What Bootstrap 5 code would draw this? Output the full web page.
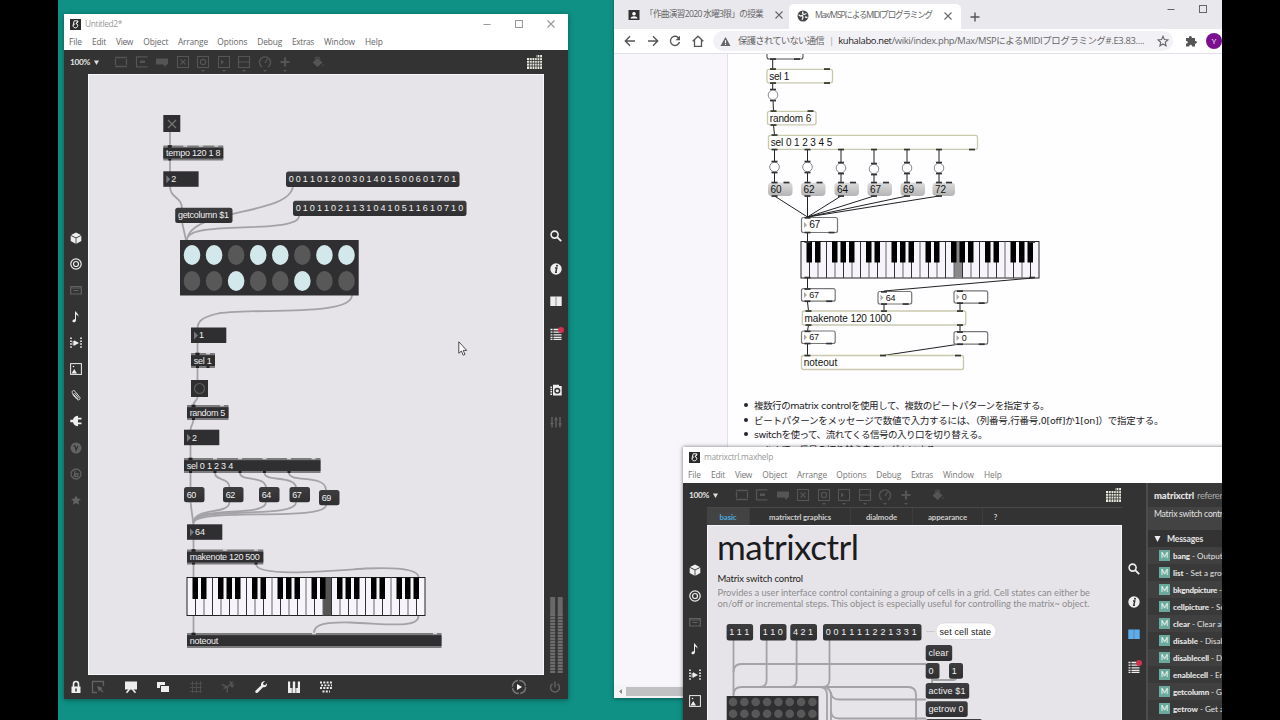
<!DOCTYPE html>
<html lang="ja">
<head>
<meta charset="utf-8">
<title>Desktop</title>
<link href="https://cdn.jsdelivr.net/npm/bootstrap@5.3.0/dist/css/bootstrap.min.css" rel="stylesheet">
<script src="https://cdn.jsdelivr.net/npm/bootstrap@5.3.0/dist/js/bootstrap.bundle.min.js"></script>
<style>
body{margin:0;width:1280px;height:720px;overflow:hidden;background:#000;font-family:"Open Sans","Noto Sans CJK JP",sans-serif;font-size:8.4px;line-height:1.2}
svg{display:block;flex:none}
.desk{position:relative;width:1164px;height:720px;margin-left:58px;background:#0f9185;overflow:hidden}
.win{position:absolute;overflow:hidden}
.w-main{left:6px;top:14px;width:504px;height:685px;background:#333;box-shadow:0 1px 5px rgba(0,40,40,.55)}
.w-web{left:556px;top:-4px;width:620px;height:702px;background:#fefdff;box-shadow:0 1px 4px rgba(0,40,40,.5)}
.w-help{left:625px;top:447px;width:560px;height:300px;background:#333;box-shadow:0 0 4px rgba(0,0,0,.55)}
.titlebar{height:20px;background:#fff;color:#999;padding-left:6px}
.menubar{height:16px;background:#fff;color:#666;display:grid;grid-template-columns:23px 24px 27.3px 34.7px 39.3px 40px 34.7px 32px 41px 30px;align-items:center;padding-left:5px}
.w-help .menubar{color:#777}
.tools{height:24px;color:#555;padding-left:6px;background:#333}
.tools .ic{margin-right:6.5px}
.zoomlvl{width:44.3px;color:#e4e4e4;font:bold 8.3px Lato,sans-serif}
.w-help .zoomlvl{width:45.7px}
.fill-gap{width:202.5px}
.w-help .fill-gap{width:161px}
.rail{width:24px;background:#333;color:#eee}
.rail .dimmed,.foot .dimmed{color:#626262}
.foot{height:24px;background:#333;color:#eee}
.foot .ic{margin-right:18.6px}
.tabsrow{height:18px;background:#333;color:#ccc;font:bold 7.8px Lato,sans-serif;border-top:1px solid #484848}
.tabsrow>div{height:17px;border-right:1px solid #3d3d3d;display:flex;align-items:center;justify-content:center}
.tabsrow .on{background:#434343;color:#49a9dd}
.refp{width:100px;background:#3b3b3b;border-left:2px solid #4d4d4d;color:#e4e4e4;font:600 8.6px Lato,sans-serif;white-space:nowrap}
.refrow{height:17px;padding-left:11px;background:#404040;font-size:8px}
.refrow:nth-child(even){background:#393939}
.mbadge{width:11px;height:11px;flex:none;background:#6aa99c;color:#e5f4f0;font-size:8px;line-height:11px;text-align:center;margin-right:3px}
.strip{height:33px;padding-top:4px;background:#e9e8ed;color:#666;font-size:8.6px}
.btab{height:29px;border-radius:5px 5px 0 0}
.btab.on{background:#fff}
.addr{height:25px;background:#fff;border-bottom:1px solid #e1e0e5;color:#555}
.omni{width:460px;height:20px;border-radius:10px;background:#f2f1f5;font-size:9.4px;color:#666}
.side{width:114px;background:#f8f6fb;border-right:1px solid #e3e1e7}
.notes{font:9.5px "DejaVu Sans","Noto Sans CJK JP",sans-serif;color:#222;list-style:none;margin:4px 0 0 16px;padding:0}
.notes li{height:14.6px;display:flex;align-items:center;white-space:nowrap}
.notes li::before{content:"";width:4px;height:4px;border-radius:2px;background:#223;margin-right:6px}
.nw{white-space:nowrap}
.avatar{width:16px;height:16px;border-radius:8px;background:#7a0f92;color:#fff;font-size:8px;line-height:16px;text-align:center}
.cursor{position:absolute;left:400px;top:341px}
.reddot{position:absolute;width:6px;height:6px;border-radius:3px;background:#cf3350;right:-2px;top:-1px}
.sheet{background:#e6e4e8;outline:1px solid #f7f6f9;outline-offset:-1px}
svg text{white-space:pre}
</style>
</head>
<body>
<svg width="0" height="0" style="position:absolute" fill="none">
<defs>
<linearGradient id="msgDark" x2="0" y2="1"><stop stop-color="#3d3c3e"/><stop offset="1" stop-color="#2f2e30"/></linearGradient>
<linearGradient id="msgLight" x2="0" y2="1"><stop stop-color="#dcdcdc"/><stop offset="1" stop-color="#b4b4b4"/></linearGradient>
<symbol id="logo" viewBox="0 0 11 11"><rect width="11" height="11" fill="#2b2b2e"/><path d="M4.2 1.800h3.600L6 5c2.500-.8 2.500 3.800-.6 3.900C2.300 8.900 2.600 5 5 5.100M4.200 1.800 3 6.500M8.300 2.500 6 5" fill="none" stroke="#eee" stroke-width="1"/></symbol>
<symbol id="t1" viewBox="0 0 14 14"><path d="M1 2.500h12M1 11.500h12M1.500 4v6M12.500 4v6" fill="none" stroke="currentColor" stroke-width="1.300"/></symbol>
<symbol id="t2" viewBox="0 0 14 14"><path d="M1.500 1.500V12M1 1.800h11.500M1 11.800h11.500" fill="none" stroke="currentColor" stroke-width="1.200"/><path d="M5 5.500h5v2.500H5z" fill="currentColor"/></symbol>
<symbol id="t3" viewBox="0 0 14 14"><path d="M1 3.500h12v6h-2V12L8 9.500H1z" fill="currentColor"/></symbol>
<symbol id="t4" viewBox="0 0 14 14"><path d="M1.500 1.500h11v11h-11zM4.500 4.500l5 5M9.500 4.500l-5 5" fill="none" stroke="currentColor" stroke-width="1.100"/></symbol>
<symbol id="t5" viewBox="0 0 14 18"><rect x="1.500" y="1.500" width="11" height="11" fill="none" stroke="currentColor" stroke-width="1.100"/><circle cx="7" cy="7" r="2.600" fill="none" stroke="currentColor" stroke-width="1.100"/><path d="M5 15h4l-2 2z" fill="currentColor"/></symbol>
<symbol id="t6" viewBox="0 0 14 18"><rect x="1.500" y="1.500" width="11" height="11" fill="none" stroke="currentColor" stroke-width="1.100"/><path d="M4 4.500v5L7 7zM5 15h4l-2 2z" fill="currentColor"/></symbol>
<symbol id="t7" viewBox="0 0 14 18"><path d="M1.500 1.500h11v11h-11zM2 7h10" fill="none" stroke="currentColor" stroke-width="1.200"/><path d="M5 15h4l-2 2z" fill="currentColor"/></symbol>
<symbol id="t8" viewBox="0 0 14 18"><path d="M4 12a5.500 5.500 0 1 1 6 0M7 8l2.500-4" fill="none" stroke="currentColor" stroke-width="1.400"/><path d="M5 15h4l-2 2z" fill="currentColor"/></symbol>
<symbol id="t9" viewBox="0 0 14 18"><path d="M7 2.500v9M2.500 7h9" fill="none" stroke="currentColor" stroke-width="2.200"/><path d="M5 15h4l-2 2z" fill="currentColor"/></symbol>
<symbol id="t10" viewBox="0 0 14 14"><path d="M1.500 7.500 6.500 3l5 4.500-5 4.500zM12.500 8.500v2.500h-1.300z" fill="currentColor"/><path d="M4 4.500a2.200 2.200 0 0 1 5 0" fill="none" stroke="currentColor"/></symbol>
<symbol id="grid" viewBox="0 0 15 14"><path d="M9.500 0h5.500v2.500H15V14H0V3h9.500z" fill="#ecece0"/><path d="M2.600 0v14M5.200 0v14M7.700 0v14M10.200 0v14M12.700 0v14M0 5.500h15M0 8.200h15M0 11h15M9.500 2.700h6" stroke="#333" stroke-width=".8"/></symbol>
<symbol id="cube" viewBox="0 0 12 12"><path d="M6 .5 11 3 6 5.500 1 3zM.7 3.700 5.600 6.200v5.500L.7 9zM11.300 3.700 6.400 6.200v5.500L11.300 9z" fill="currentColor"/></symbol>
<symbol id="target" viewBox="0 0 12 12"><g fill="none" stroke="currentColor" stroke-width="1.200"><circle cx="6" cy="6" r="5.200"/><circle cx="6" cy="6" r="2.500"/></g></symbol>
<symbol id="drawer" viewBox="0 0 12 12"><path d="M.7 2.500h10.600v7.500H.7zM1 4h10M3.500 6.500h5" fill="none" stroke="currentColor" stroke-width="1.200"/></symbol>
<symbol id="note" viewBox="0 0 12 12"><path d="M6 .5v8.500c0 2.700-3.500 3-3.500 1.200C2.500 8.700 4 8 5 8.300V.5h1c.3 1.800 3.300 2.500 2.300 5.500C8 4.300 7 3.800 6 3.500" fill="currentColor"/></symbol>
<symbol id="film" viewBox="0 0 12 12"><path d="M1 .5v11M11 .5v11" stroke="currentColor" stroke-width="1.700" stroke-dasharray="1.500 1.400"/><path d="M4 3.200v5.600L9 6z" fill="currentColor"/><path d="M3.200 4v4.500" stroke="currentColor" stroke-width="1"/></symbol>
<symbol id="pic" viewBox="0 0 12 12"><rect x=".6" y=".6" width="10.800" height="10.800" fill="none" stroke="currentColor"/><path d="M1.500 10.500 4.200 6l2.800 4.500z" fill="currentColor"/><circle cx="3.500" cy="3.500" r=".8" fill="currentColor"/></symbol>
<symbol id="clip" viewBox="0 0 12 12"><path d="M2.500 5.500 7 10.300c1.700 1.600 4-.4 2.600-2.200L5 2.300C3.500.6 1.200 2.300 2.500 4.200l4.300 5c.8.800 1.900 0 1.200-.9L4.500 4" fill="none" stroke="currentColor" stroke-width=".9"/></symbol>
<symbol id="plug" viewBox="0 0 12 12"><path d="M8 .8v10.400C4.500 11 3.500 9 3 7.200H.3V4.800H3C3.500 3 4.500 1 8 .8zM8 2.700h3.500v1.800H8zM8 7.500h3.500v1.800H8z" fill="currentColor"/></symbol>
<symbol id="vee" viewBox="0 0 12 12"><circle cx="6" cy="6" r="5.500" fill="currentColor"/><path d="M3.500 3.800h1.500L6 8l2-4" fill="none" stroke="#333" stroke-width="1.300"/></symbol>
<symbol id="bee" viewBox="0 0 12 12"><circle cx="6" cy="6" r="5" fill="none" stroke="currentColor" stroke-width="1.300"/><path d="M5 2.500 4 9M6 5.500h2v3H5.500z" fill="none" stroke="currentColor" stroke-width="1.200"/></symbol>
<symbol id="star" viewBox="0 0 12 12"><path d="m6 1.300 1.400 3.300 3.600.3-2.700 2.400.8 3.500L6 9l-3.100 1.800.8-3.500L1 4.900l3.600-.3z" fill="currentColor"/></symbol>
<symbol id="staro" viewBox="0 0 12 12"><path d="m6 1.300 1.400 3.300 3.600.3-2.700 2.400.8 3.500L6 9l-3.100 1.800.8-3.500L1 4.900l3.600-.3z" fill="none" stroke="currentColor" stroke-width="1.100"/></symbol>
<symbol id="mag" viewBox="0 0 12 12"><circle cx="4.600" cy="4.600" r="3.500" fill="none" stroke="currentColor" stroke-width="1.600"/><path d="m7.200 7.200 4 4" stroke="currentColor" stroke-width="1.900"/></symbol>
<symbol id="info" viewBox="0 0 12 12"><circle cx="6" cy="6" r="5.700" fill="currentColor"/><path d="M5 5h1.800L5.700 9.200h1.200" fill="none" stroke="#333" stroke-width="1.400"/><circle cx="7" cy="2.800" r="1" fill="#333"/></symbol>
<symbol id="book" viewBox="0 0 12 12"><path d="M.3 1.500h11.400v9.500H.3z" fill="currentColor"/><path d="M6 1.500v9.500" stroke="#777" stroke-width=".8"/></symbol>
<symbol id="list" viewBox="0 0 12 12"><path d="M.5 1.500h2M.5 4.200h2M.5 6.800h2M.5 9.300h2M.5 11.400h2M3.500 1.500h8M3.500 4.200h8M3.500 6.800h8M3.500 9.300h8M3.500 11.400h8" stroke="currentColor" stroke-width="1.300"/></symbol>
<symbol id="cam" viewBox="0 0 12 12"><path d="M3 .8h6V2h2.700v9.500H3z" fill="currentColor"/><path d="M1.200 2.500v9" stroke="currentColor" stroke-width="1.600" stroke-dasharray="1.500 .8"/><circle cx="7.300" cy="6.700" r="2.300" fill="none" stroke="#333" stroke-width="1.500"/></symbol>
<symbol id="faders" viewBox="0 0 12 12"><path d="M2 1v10.500M6 1v10.500M10 1v10.500M.5 7.500h3M4.500 3.500h3M8.500 8h3" stroke="currentColor" stroke-width="1.400"/></symbol>
<symbol id="lock" viewBox="0 0 14 14"><path d="M2.500 6.500h9V13h-9z" fill="currentColor"/><path d="M4.500 7V4a2.500 2.500 0 0 1 5 0v3" fill="none" stroke="currentColor" stroke-width="1.600"/><path d="M7 8.500v3" stroke="#333" stroke-width="1.500"/></symbol>
<symbol id="sel" viewBox="0 0 14 14"><path d="M12.500 6V1.500h-11v11H6" fill="none" stroke="currentColor" stroke-width="1.300"/><path d="M6 6l6 2-2 1 2.500 2.500-1 1L9 10l-1 2z" fill="currentColor"/></symbol>
<symbol id="easel" viewBox="0 0 14 14"><path d="M1 1.500h12v8H1z" fill="currentColor"/><path d="m6.500 8-4 4.800M7.500 8l4 4.800" stroke="currentColor" stroke-width="1.600"/></symbol>
<symbol id="layers" viewBox="0 0 14 14"><path d="M1 2h8v6H1z" fill="currentColor"/><path d="M4.500 5.500h9v7h-9z" fill="currentColor" stroke="#333"/></symbol>
<symbol id="hash" viewBox="0 0 14 14"><path d="M3.500 1v12M7.500 1v12M11.500 1v12M1 3.500h12M1 7.500h12M1 11.500h12" stroke="currentColor" stroke-width=".9"/></symbol>
<symbol id="patch" viewBox="0 0 14 14"><path d="M1 4.500 6.500 7 6 12.500M6.500 7l5.500-5M9.500 1v4h3.500M2.500 8.500 6 7M10 6l2 1" fill="none" stroke="currentColor" stroke-width="1.400"/></symbol>
<symbol id="wrench" viewBox="0 0 14 14"><path d="M1.500 10.800 7 5.500C6.500 3 8.500.8 11 1.300L9 3.300l.4 1.500 1.600.4 2-2c.5 2.600-1.600 4.600-4 4L3.600 12.700c-1.500 1-3-.5-2.100-1.900z" fill="currentColor"/></symbol>
<symbol id="keys" viewBox="0 0 14 14"><path d="M1 1.500h2.200v6.500h1.600v5H1zM5.400 13V8h.4V1.500h2.400V8h.4v5zM9.200 13V8h1.600V1.500H13V13z" fill="currentColor"/></symbol>
<symbol id="kbd" viewBox="0 0 14 14"><path d="M1 2.500h12M1 8h12" stroke="currentColor" stroke-width="1.800" stroke-dasharray="2 1.300"/><path d="M2 5.300h11M3.500 11.500h7.500" stroke="currentColor" stroke-width="1.800" stroke-dasharray="2 1.300"/></symbol>
<symbol id="play" viewBox="0 0 16 16"><circle cx="8" cy="8" r="6.600" fill="none" stroke="#777" stroke-width="1.500" stroke-dasharray="9 1.400"/><path d="M6 5v6l5-3z" fill="#fff"/></symbol>
<symbol id="power" viewBox="0 0 12 12"><path d="M3.500 2.800a4.500 4.500 0 1 0 5 0M6 .5v6" fill="none" stroke="currentColor" stroke-width="1.400"/></symbol>
<symbol id="close" viewBox="0 0 10 10"><path d="m1.500 1.500 7 7M8.500 1.500l-7 7" stroke="currentColor" stroke-width="1.100"/></symbol>
<symbol id="min" viewBox="0 0 10 10"><path d="M1.500 5.500h7" stroke="currentColor" stroke-width="1"/></symbol>
<symbol id="max" viewBox="0 0 10 10"><rect x="1.500" y="1.500" width="7" height="7" fill="none" stroke="currentColor"/></symbol>
<symbol id="larr" viewBox="0 0 12 12"><path d="M11 6H1.500M6 1.300 1.300 6 6 10.700" fill="none" stroke="currentColor" stroke-width="1.400"/></symbol>
<symbol id="rarr" viewBox="0 0 12 12"><path d="M1 6h9.500M6 1.300 10.700 6 6 10.700" fill="none" stroke="currentColor" stroke-width="1.400"/></symbol>
<symbol id="reload" viewBox="0 0 12 12"><path d="M10 3.500A4.600 4.600 0 1 0 10.500 7" fill="none" stroke="currentColor" stroke-width="1.400"/><path d="M11 .8v4.500H6.500z" fill="currentColor"/></symbol>
<symbol id="home" viewBox="0 0 12 12"><path d="M.7 6.300 6 1.200l5.300 5.100M2.500 5v6.300h7V5" fill="none" stroke="currentColor" stroke-width="1.300"/></symbol>
<symbol id="warn" viewBox="0 0 12 12"><path d="M6 1 11.500 11H.5z" fill="currentColor"/><path d="M6 4.500v3M6 8.500v1.200" stroke="#fff" stroke-width="1.200"/></symbol>
<symbol id="puzzle" viewBox="0 0 12 12"><path d="M1 3h3c-.5-2.800 3.300-2.800 2.800 0H10v3c2.500-.3 2.500 3 0 2.700v2.800H7c.3-2.500-3-2.500-2.700 0H1V8.700c2.300.2 2.300-3 0-2.700z" fill="currentColor"/></symbol>
<symbol id="globe" viewBox="0 0 12 12"><circle cx="6" cy="6" r="5.500" fill="#444"/><path d="M1.500 4.800 3.500 6l2-.5L6 7.500 5 9.800M6 1.500 5.500 3.500 7 4.500l2.500-1M8 7l2.500.5" fill="none" stroke="#f2f2f2" stroke-width="1.300"/></symbol>
<symbol id="face" viewBox="0 0 12 12"><rect x=".5" y="1" width="11" height="10" fill="#333"/><circle cx="6" cy="4.700" r="1.800" fill="#fff"/><path d="M2.500 9.500c.5-3 6.500-3 7 0z" fill="#fff"/></symbol>
</defs></svg>

<main class="desk">
  <!-- browser -->
  <section class="win w-web d-flex flex-column">
    <div class="strip d-flex">
      <div class="btab d-flex align-items-center" style="width:175px;padding-left:14px"><svg width="12" height="12"><use href="#face"/></svg><span class="nw" data-w="118" style="margin-left:5px">「作曲演習2020 水曜3限」の授業</span><svg class="ms-auto" width="10" height="10" style="margin-right:5px"><use href="#close"/></svg></div>
      <div class="btab on d-flex align-items-center mt-1" style="width:172px;height:26px;padding:0 8px 3px"><svg width="12" height="12"><use href="#globe"/></svg><span class="nw" data-w="117" style="margin-left:6px">Max/MSPによるMIDIプログラミング</span><svg class="ms-auto" width="10" height="10"><use href="#close"/></svg></div>
      <svg width="12" height="12" style="margin:11px 0 0 8px"><path d="M6 1.500v9M1.500 6h9" stroke="#555" stroke-width="1.400"/></svg>
      <svg width="10" height="10" style="margin:4px 0 0 185px"><use href="#min"/></svg>
      <svg width="10" height="10" style="margin:4px 0 0 22px"><use href="#max"/></svg>
    </div>
    <div class="addr d-flex align-items-center" style="padding-left:10px">
      <svg width="12" height="12"><use href="#larr"/></svg><svg width="12" height="12" style="margin-left:10.500px"><use href="#rarr"/></svg><svg width="12" height="12" style="margin-left:10.500px"><use href="#reload"/></svg><svg width="12" height="12" style="margin-left:11px"><use href="#home"/></svg>
      <div class="omni d-flex align-items-center" style="margin-left:9px;padding-left:7px"><svg width="11" height="11"><use href="#warn"/></svg><span class="nw" data-w="86" style="margin-left:7px">保護されていない通信</span><span style="margin:0 2px 0 5px;color:#aaa">|</span><span class="nw" data-w="306" style="margin-left:2px"><span style="color:#222">kuhalabo.net</span>/wiki/index.php/Max/MSPによるMIDIプログラミング#.E3.83....</span><svg class="ms-auto" width="12" height="12" style="margin-right:4px"><use href="#staro"/></svg></div>
      <svg width="12" height="12" style="margin-left:12px"><use href="#puzzle"/></svg><div class="avatar" style="margin-left:9px">Y</div>
    </div>
    <div class="d-flex flex-grow-1">
      <div class="side flex-shrink-0"></div>
      <div>
        <svg id="wiki" width="492" height="340" viewBox="728 54 492 340" font-family="Liberation Sans,sans-serif" fill="#111"></svg>
        <ul class="notes">
          <li><span data-w="295">複数行のmatrix controlを使用して、複数のビートパターンを指定する。</span></li>
          <li><span data-w="409">ビートパターンをメッセージで数値で入力するには、（列番号,行番号,0[off]か1[on]）で指定する。</span></li>
          <li><span data-w="233">switchを使って、流れてくる信号の入り口を切り替える。</span></li>
          <li><span data-w="190">switchで、信号の切り替えをランダムにする。</span></li>
        </ul>
      </div>
    </div>
    <div class="d-flex align-items-center" style="height:13px;padding-left:4px;background:#f4f3f6"><svg width="5" height="7"><path d="M4 1v5L1 3.500z" fill="#888"/></svg><div style="width:560px;height:9px;margin-left:3px;background:#c1c1c3"></div></div>
  </section>

  <!-- patcher -->
  <section class="win w-main d-flex flex-column">
    <div class="titlebar d-flex align-items-center"><svg width="11" height="11"><use href="#logo"/></svg><span class="nw" data-w="37" style="margin-left:4px">Untitled2*</span><span class="ms-auto d-flex" style="gap:22px;padding-right:12px"><svg width="10" height="10"><use href="#min"/></svg><svg width="10" height="10"><use href="#max"/></svg><svg width="10" height="10"><use href="#close"/></svg></span></div>
    <nav class="menubar"></nav>
    <div class="tools d-flex align-items-center"></div>
    <div class="d-flex">
      <div class="rail d-flex flex-column align-items-center" style="height:601px;padding-top:158px;gap:14.200px" data-icons="cube target -drawer note film pic clip plug -vee -bee -star"></div>
      <svg id="patcher" class="sheet" width="456" height="601" viewBox="88 74 456 601" font-family="Liberation Sans,sans-serif"></svg>
      <div class="rail d-flex flex-column align-items-center" style="padding-top:156px">
        <div class="d-flex flex-column" style="gap:20.500px" data-icons="mag info book list"></div>
        <div class="d-flex flex-column" style="gap:20.500px;margin-top:44px" data-icons="cam -faders"></div>
        <svg class="mt-auto" width="14" height="76" style="margin-bottom:2px"><path d="M3.700 0v17M11.200 0v17" stroke="#686868" stroke-width="5"/><path d="M3.700 17v59M11.200 17v59" stroke="#4a4a4a" stroke-width="5"/><path d="M3.700 17v59M11.200 17v59" stroke="#6c6c6c" stroke-width="5" stroke-dasharray="2 1"/></svg>
      </div>
    </div>
    <div class="foot d-flex align-items-center" style="padding-left:5px">
      <svg width="14" height="14" style="margin-right:8px"><use href="#lock"/></svg>
      <svg class="ic dimmed" width="14" height="14"><use href="#sel"/></svg><svg class="ic" width="14" height="14"><use href="#easel"/></svg><svg class="ic" width="14" height="14"><use href="#layers"/></svg><svg class="ic dimmed" width="14" height="14" opacity=".6"><use href="#hash"/></svg><svg class="ic dimmed" width="14" height="14" opacity=".7"><use href="#patch"/></svg><svg class="ic" width="14" height="14"><use href="#wrench"/></svg><svg class="ic" width="14" height="14"><use href="#keys"/></svg><svg class="ic" width="14" height="14"><use href="#kbd"/></svg>
      <svg class="ms-auto" width="16" height="16" style="margin-right:22px"><use href="#play"/></svg><svg class="dimmed" width="12" height="12" style="margin-right:7px"><use href="#power"/></svg>
    </div>
  </section>

  <!-- help file -->
  <section class="win w-help d-flex flex-column">
    <div class="titlebar d-flex align-items-center"><svg width="11" height="11"><use href="#logo"/></svg><span class="nw" data-w="69" style="margin-left:4px">matrixctrl.maxhelp</span></div>
    <nav class="menubar"></nav>
    <div class="d-flex" style="height:264px">
      <div class="flex-shrink-0" style="width:463px">
        <div class="tools d-flex align-items-center"></div>
        <div class="d-flex">
          <div class="rail d-flex flex-column align-items-center" style="padding-top:57px;gap:14.200px" data-icons="cube target -drawer note film pic"></div>
          <div>
            <div class="tabsrow d-flex"><div class="on" style="width:43px"><span data-w="17">basic</span></div><div style="width:101px"><span class="nw" data-w="62">matrixctrl graphics</span></div><div style="width:62px"><span data-w="31">dialmode</span></div><div style="width:70px"><span data-w="39">appearance</span></div><div class="border-0" style="width:25px">?</div></div>
            <svg id="helpc" class="sheet" width="415" height="222" viewBox="707 525 415 222" font-family="Liberation Sans,sans-serif"></svg>
          </div>
          <div class="rail d-flex flex-column align-items-center" style="padding-top:56px;gap:20.500px" data-icons="mag info book list" data-on="book"></div>
        </div>
      </div>
      <div class="refp">
        <div class="d-flex align-items-center" style="height:24px;padding-left:6px;font-size:9.500px;background:#383838"><b data-w="40">matrixctrl</b><span data-w="36" style="margin-left:3px;color:#aaa;font-weight:400">reference</span></div>
        <div style="height:23px;padding:1px 0 0 6px;line-height:12px;background:#434343;font-weight:400"><span data-w="75">Matrix switch control</span></div>
        <div class="d-flex align-items-center" style="height:17px;padding-left:6px;background:#333;font-weight:700"><svg width="8" height="8"><path d="M.5 1h6L3.500 7z" fill="#eee"/></svg><span data-w="36" style="margin-left:5px">Messages</span></div>
        <div id="msgs"></div>
      </div>
    </div>
  </section>
  <svg class="cursor" width="11" height="16" viewBox="0 0 11 16"><path d="M.8.8v11.500l2.600-2.300 1.800 4.200 1.800-.8-1.800-4h3.500z" fill="#fff" stroke="#222" stroke-width=".8"/></svg>
</main>

<script>
// shared chrome
const use = (id, w, h, cls = '') => `<svg class="${cls}" width="${w}" height="${h}"><use href="#${id}"/></svg>`;
document.querySelectorAll('.menubar').forEach(m => m.innerHTML =
  ['File:13','Edit:14','View:17','Object:25','Arrange:30','Options:30','Debug:25','Extras:22','Window:31','Help:18'].map(s => { const [t, w] = s.split(':'); return `<span><span data-w="${w}">${t}</span></span>`; }).join(''));
document.querySelectorAll('.tools').forEach(t => t.innerHTML =
  '<div class="zoomlvl d-flex align-items-center"><span data-w="20">100%</span><svg width="7" height="7" style="margin-left:3px"><path d="M1 1.500h5L3.500 6z" fill="#ddd"/></svg></div>' +
  [1,2,3,4,5,6,7,8,9].map(n => use('t' + n, 14, n > 4 ? 18 : 14, 'ic' + (n > 4 ? ' mt-1' : ''))).join('') +
  '<span style="width:12px"></span>' + use('t10', 14, 14) + '<span class="fill-gap"></span>' + use('grid', 15, 14));
document.querySelectorAll('[data-icons]').forEach(r => r.innerHTML = r.dataset.icons.split(' ').map(n => {
  const dim = n[0] === '-', id = n.replace('-', '');
  return `<div class="position-relative ${dim ? 'dimmed' : ''}"${r.dataset.on === id ? ' style="color:#5aaef0"' : ''}>${use(id, 12, 12)}${id === 'list' ? '<i class="reddot"></i>' : ''}</div>`;
}).join(''));
document.getElementById('msgs').innerHTML = [['bang','Output',17],['list','Set a group',10.5],['bkgndpicture','Set',44],['cellpicture','Set',36],['clear','Clear all',17],['disable','Disable',25],['disablecell','Disable',36],['enablecell','Enable',35],['getcolumn','Get',36],['getrow','Get a row',25]]
  .map(([a, b, w]) => `<div class="refrow d-flex align-items-center"><span class="mbadge">M</span><b data-w="${w}">${a}</b><span class="fw-normal">&nbsp;- ${b}</span></div>`).join('');

// patcher drawing
const T = (x, y, s, w, size = 9, fill = '#f0f0f0', more = '') => `<text x="${x}" y="${y}" font-size="${size}" fill="${fill}" textLength="${w}" ${more}>${s}</text>`;
const R = (x, y, w, h, fill, more = '') => `<rect x="${x}" y="${y}" width="${w}" height="${h}" fill="${fill}" ${more}/>`;
const cord = (d, c = '#a3a2a5', w = 1.8) => `<path d="${d}" fill="none" stroke="${c}" stroke-width="${w}"/>`;
const msg = (x, y, w, h, s, tw) => R(x, y, w, h, 'url(#msgDark)', 'rx="2.500"') + (s && T(x + 2.700, y + h / 2 + 3, s, tw));
const num = (x, y, s) => R(x, y, 35.300, 15.500, '#2f2e30') + `<path d="M${x + 3} ${y + 4}v8l4-4z" fill="#777"/>` + T(x + 8, y + 10.800, s, s.length * 5);
const obj = (x, y, w, s, tw, ins, outs) => R(x, y, w, 15, '#7c7b7d') + R(x, y + 2.200, w, 10.800, '#2f2e30') +
  ins.map((i, k) => R(x + i - 2, y - .3, 4, k ? 1.600 : 2.500, k ? '#d5d4d6' : '#222')).join('') + outs.map(i => R(x + i - 1.500, y + 13, 3, 2, '#222')).join('') + T(x + 2.700, y + 10.700, s, tw);
function piano(x, y, h, bh, pressed, key) {
  let a = R(x, y, 238, h, '#f7f5fb', 'stroke="#222"'), b = '';
  for (let i = 0; i < 28; i++) {
    const kx = x + i * 8.5;
    if (i === pressed) a += R(kx, y, 8.5, h, key);
    if (i) a += R(kx - .5, y, 1, h, i % 2 ? '#333' : '#666');
    if (![2, 6].includes(i % 7) && i < 27) b += R(kx + 5.500, y, 5.500, bh, '#000');
  }
  return a + b;
}
let p = '';
['M170 132V146','M170 160V172','M170 186C170 199 182 196 182 209','M182 222 186 240','M293 186C290 216 190 208 187 240','M299 216C299 234 195 221 188 237',
 'M352 295C352 318 245 307 216 314C202 317.500 198 321 197.500 328','M197.500 342V354','M197.500 367V381','M197.500 397C197.500 401 193.500 401 193.500 405','M193.500 419C193.500 425 190.500 425 190.500 430','M190.500 445V459',
 'M190.500 473V487','M215 473C215 481 229.500 477 229.500 488','M240 473C240 482 266 475 266 488','M264.500 473C264.500 482 296 475 296 488','M289 473C289 483 326 474 326 490',
 'M190.500 502 193.500 525','M229.500 502C229.500 515 193.500 507 193.500 523','M266 502C266 518 196 505 193.500 523','M296 502C296 520 196 505 193.500 523','M326 505C326 522 196 507 193.500 523',
 'M193.500 539V550','M193.500 564V633','M256 564C256 578 335 570.500 365 568.500C398 567 418 569 418.500 577','M418.500 616C418.500 629 385 623.500 350 622.500C326 622 314 624 314 633'].forEach(d => p += cord(d));
p += R(163.300, 115, 17, 17, '#2f2e30') + cord('M168 120l8 8M176 120l-8 8', '#777', 1.200);
p += obj(163.300, 145.500, 60, 'tempo 120 1 8', 54.500, [6.500, 22, 37.500, 53], [6.500]) + num(163.300, 171.300, '2');
p += msg(286, 171.500, 173.500, 15.500, '0 0 1 1 0 1 2 0 0 3 0 1 4 0 1 5 0 0 6 0 1 7 0 1', 167.500) + msg(293, 200.700, 173.500, 15.300, '0 1 0 1 1 0 2 1 1 3 1 0 4 1 0 5 1 1 6 1 0 7 1 0', 167.500);
p += msg(175.200, 207.800, 57.300, 15.300, 'getcolumn $1', 51) + R(180, 240, 178.700, 55.500, '#2f2e30');
['11011011', '00100100'].forEach((r, j) => [...r].forEach((c, i) => p += `<ellipse cx="${192 + i * 22.07}" cy="${255 + j * 26}" rx="8.300" ry="10" fill="${c > 0 ? '#d3e8ea' : '#585858'}"/>`));
p += num(191, 327.500, '1') + obj(191, 353, 24, 'sel 1', 18, [6.500, 17], [6.500, 17]) + R(191, 380, 17, 17, '#2f2e30') + '<circle cx="199.500" cy="388.500" r="5" fill="none" stroke="#5d5d5d" stroke-width="1.200"/>';
p += obj(187, 405, 41.500, 'random 5', 35.500, [6.500, 35], [6.500]) + num(184, 429.700, '2') + obj(184, 458, 136.500, 'sel 0 1 2 3 4', 46.500, [6.500, 31, 56, 80.500, 105, 129.500], [6.500, 31, 56, 80.500, 105]);
[[184, 487, '60'], [223, 487, '62'], [259, 487, '64'], [289.500, 487, '67'], [319, 490, '69']].forEach(([x, y, s]) => p += msg(x, y, 20.500, 15.300, s, 9.500));
p += num(187, 524.300, '64') + obj(187, 549.500, 76.300, 'makenote 120 500', 70, [6.500, 38, 69], [6.500, 69]) + piano(187, 577.500, 38, 21.500, 16, '#555') + obj(187, 633, 254.500, 'noteout', 28.500, [6.500, 127, 248], []);
document.getElementById('patcher').innerHTML = p;

// wiki diagram
let q = '';
const L = (...c) => { for (let i = 0; i < c.length; i += 4) q += cord(`M${c[i]} ${c[i + 1]} ${c[i + 2]} ${c[i + 3]}`, '#222', 1); };
const dash = (x, y) => q += R(x - 3, y - .8, 6, 1.700, '#333');
const box = (x, y, w, h, s, tw) => { q += R(x, y, w, h, '#fff', 'rx="2" stroke="#c9c9ae" stroke-width="1.300"') + T(x + 2.200, y + 10.500, s, tw, 10, '#111'); };
const nb = (x, y, w, h, s, fs = 9) => { q += R(x, y, w, h, '#fff', 'rx="2" stroke="#777" stroke-width="1.200"') + `<path d="M${x + 2.500} ${y + h / 2 - 3}v6l3-3z" fill="#aaa"/>` + T(x + 7.700, y + h / 2 + 3.200, s, s.length * fs * .54, fs, '#111'); dash(x + 6, y + .3); dash(x + 6, y + h); dash(x + w - 6, y + h); };
q += cord('M767 54v3q0 2 2 2h32q2 0 2-2v-3', '#555', 1.100);
L(772.7, 59, 772.7, 69, 772.7, 83, 772.7, 90, 773, 100, 773.5, 111, 773.5, 125, 774.5, 135);
box(767, 69.300, 65.500, 13.500, 'sel 1', 20); box(767.500, 111.300, 48.500, 13.500, 'random 6', 41.500); box(768.500, 135.300, 209, 14, 'sel 0 1 2 3 4 5', 61.500);
[[773,59],[797,59],[773,69],[827,69],[773,83],[827,83],[773,89.500],[773,100.500],[773.5,111],[810.500,111],[773.500,125],[774.500,135],[972,149.500]].forEach(a => dash(...a));
q += '<circle cx="773" cy="95" r="4.800" fill="#fff" stroke="#888"/>';
[[774.5, 167, '60'], [807.5, 167, '62'], [841, 168, '64'], [874, 169, '67'], [907, 168, '69'], [939, 168, '72']].forEach(([x, y, s], i) => {
  L(x, 149.500, x, y - 5, x, y + 5, x, 183, x, 196, 807.500, 217);
  q += `<circle cx="${x}" cy="${y}" r="4.800" fill="#fff" stroke="#888"/>` + R(x - 6.500, 182.500, i === 5 ? 22.500 : 24.500, 13.500, 'url(#msgLight)', 'rx="4"') + T(x - 4, 192.500, s, 11, 10, '#111');
  dash(x, 149.500); dash(x, y - 5.500); dash(x, y + 5.500); dash(x, 182.500); dash(x + (i === 5 ? 10 : 12), 182.500); dash(x, 196);
});
L(807.5, 233, 807.5, 241, 807.5, 278, 807.5, 289, 1033, 278, 884, 291, 807.5, 302, 808.5, 311, 884, 304, 884, 311, 960, 303, 960, 311, 808.5, 325, 807.5, 331, 960, 325, 960, 331, 807.5, 343, 807.5, 355, 960, 344, 883, 355.5);
nb(801.500, 217.500, 36, 15, '67', 10.300);
q += piano(801, 241.500, 36.500, 21, 18, '#888');
dash(807.500, 242); dash(807.500, 277.500); dash(1032, 242); dash(1032, 277.500);
nb(801.500, 288.700, 33.700, 12.500, '67'); nb(878, 291.500, 33.700, 12.500, '64'); nb(954, 290.800, 33.700, 12.300, '0'); nb(801.500, 331, 33.700, 12.500, '67'); nb(954, 331.700, 33.700, 12.500, '0');
box(802.300, 311, 163.500, 14, 'makenote 120 1000', 87); box(801.500, 355.500, 162, 14, 'noteout', 33.500);
[[808.5,311],[884,311],[960,311],[808.5,325],[960,325],[807.5,355.5],[883,355.5],[958,355.5]].forEach(a => dash(...a));
document.getElementById('wiki').innerHTML = q;

// help canvas
let h = T(717, 560, 'matrixctrl', 142, 35, '#1c1c1e', 'font-family="Lato"') + T(717.500, 581.500, 'Matrix switch control', 85.500, 9.500, '#222', 'font-family="Lato"') +
  T(717.500, 596, 'Provides a user interface control containing a group of cells in a grid. Cell states can either be', 372.500, 9.300, '#8d8c8f', 'font-family="Lato"') +
  T(717.500, 606.500, 'on/off or incremental steps. This object is especially useful for controlling the matrix~ object.', 372, 9.300, '#8d8c8f', 'font-family="Lato"');
['M733.500 640V696','M766.600 640V680q0 7-7 7','M796.600 640V680q0 7-7 7','M829.500 640V680q0 7-7 7','M733.500 672q0-8 8-8H926','M733.500 695q0-8 8-8H908q8 0 8 8V725','M820 687q7 0 7 8V725','M824 687q7 1 7 9V725','M831 692q0 7.500 8 7.500H926','M831 711q0 7.500 8 7.500H926','M932 678V683M956 678q0 2-3 2H932'].forEach(d => h += cord(d));
h += msg(726.600, 624, 26.500, 16.500, '1 1 1', 20) + msg(760, 624, 26.500, 16.500, '1 1 0', 20) + msg(790.300, 624, 26.700, 16.500, '4 2 1', 20) + msg(823, 624, 98.500, 16.500, '0 0 1 1 1 1 2 2 1 3 3 1', 91);
h += cord('M926 631.500h9', '#ccc', 1) + R(936, 623, 60, 16.500, '#fff', 'rx="8" stroke="#d5d4d8" stroke-width=".7"') + T(939.500, 634.500, 'set cell state', 51.500, 9, '#222');
h += msg(925.700, 645, 26.500, 16, 'clear', 20) + msg(925.700, 663, 13.800, 15.700, '0', 5) + msg(949, 663, 14, 15.700, '1', 5) + msg(925.700, 683, 43.500, 15.700, 'active $1', 37) + msg(925.700, 701.300, 42, 15.700, 'getrow 0', 35) + msg(925.700, 719, 56.500, 15.700, '', 0);
h += R(726.700, 696, 91.800, 40, '#2f2e30');
for (let j = 0; j < 2; j++) for (let i = 0; i < 8; i++) h += `<circle cx="${733 + i * 11.35}" cy="${702 + j * 11.700}" r="4.300" fill="#585858"/>`;
document.getElementById('helpc').innerHTML = h;

// tracking for labels that have a fixed measure
document.querySelectorAll('span[data-w],b[data-w]').forEach(e => {
  e.style.whiteSpace = 'nowrap';
  const n = e.getBoundingClientRect().width;
  e.style.letterSpacing = (e.dataset.w - n) / e.textContent.length + 'px';
});
</script>
</body>
</html>
